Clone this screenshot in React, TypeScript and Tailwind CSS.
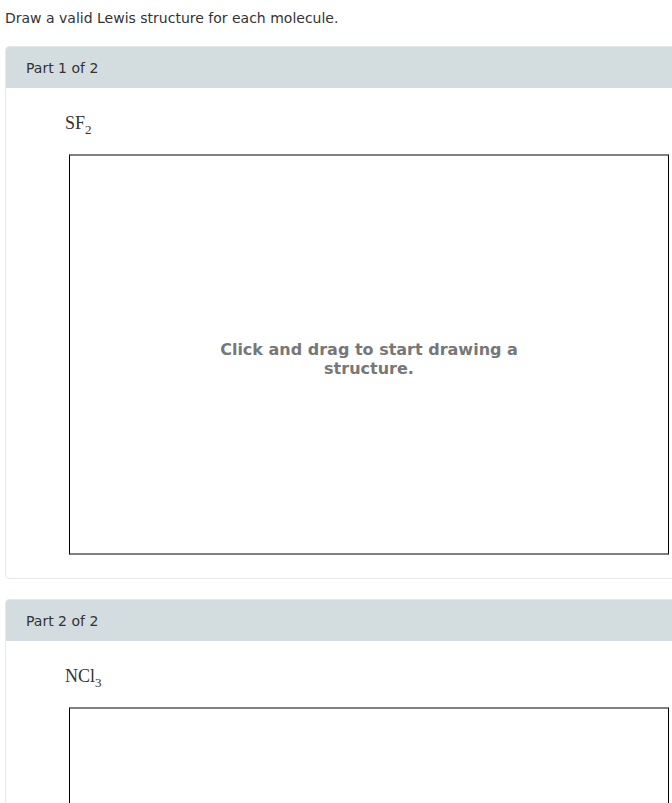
import React from 'react';

const Part = ({ index, formula, sub }: { index: number; formula: string; sub: string }) => (
  <div className="ml-[5px] w-[700px] rounded-[4px] border border-[#e3e8e9] bg-white">
    <div className="flex h-[41px] items-center rounded-t-[3px] bg-[#d3dcdf] pl-[20px] pt-[2px] text-[14px] text-[#333]">
      Part {index} of 2
    </div>
    <div className="pl-[63px] pt-[24px] pb-[23px]">
      <div className="-ml-[4px] h-[42px] font-['Liberation_Serif',serif] text-[18px] leading-[22px] text-[#333]">
        {formula}
        <span className="relative top-[5px] text-[13px]">{sub}</span>
      </div>
      <div className="flex h-[401px] w-[600px] items-center justify-center border-x border-y-2 border-x-black border-y-[#808080] bg-white pt-[8px]">
        <p className="w-[300px] text-center text-[16px] font-bold leading-[19px] text-[#777]">
          Click and drag to start drawing a structure.
        </p>
      </div>
    </div>
  </div>
);

export default function App() {
  return (
    <div className="h-[803px] overflow-hidden bg-white font-['DejaVu_Sans',Verdana,sans-serif]">
      <p className="pl-[5px] pt-[9px] text-[14px] leading-[18px] text-[#333]">
        Draw a valid Lewis structure for each molecule.
      </p>
      <div className="mt-[19px] flex flex-col gap-[20px]">
        <Part index={1} formula="SF" sub="2" />
        <Part index={2} formula="NCl" sub="3" />
      </div>
    </div>
  );
}
